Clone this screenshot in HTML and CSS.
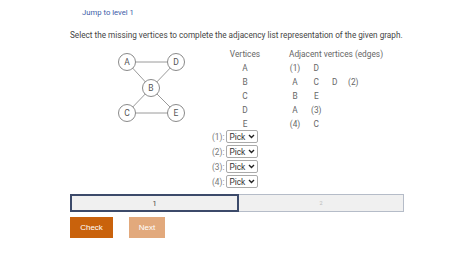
FILE: index.html
```html
<!DOCTYPE html>
<html>
<head>
<meta charset="utf-8">
<link rel="stylesheet" href="styles.css">
</head>
<body>
<div class="page">
  <div class="jump">Jump to level 1</div>
  <p class="prompt">Select the missing vertices to complete the adjacency list representation of the given graph.</p>
  <div class="problem">
    <svg class="graph" width="90" height="80" viewBox="0 0 90 80">
      <g stroke="#9a9a9a" stroke-width="1" fill="none">
        <line x1="17" y1="13" x2="66" y2="13"/>
        <line x1="17" y1="13" x2="41" y2="39"/>
        <line x1="66" y1="13" x2="41" y2="39"/>
        <line x1="41" y1="39" x2="17" y2="64"/>
        <line x1="41" y1="39" x2="66" y2="64"/>
        <line x1="17" y1="64" x2="66" y2="64"/>
      </g>
      <g stroke="#8a8a8a" stroke-width="1" fill="#fff">
        <circle cx="17" cy="13" r="8.5"/>
        <circle cx="66" cy="13" r="8.5"/>
        <circle cx="41" cy="39" r="8.5"/>
        <circle cx="17" cy="64" r="8.5"/>
        <circle cx="66" cy="64" r="8.5"/>
      </g>
      <g font-family="Roboto, sans-serif" font-size="8.5" fill="#555" text-anchor="middle">
        <text x="17" y="16">A</text>
        <text x="66" y="16">D</text>
        <text x="41" y="42">B</text>
        <text x="17" y="67">C</text>
        <text x="66" y="67">E</text>
      </g>
    </svg>
    <div class="lists">
      <div class="table">
        <div class="vcol head">Vertices</div><div class="acol head">Adjacent vertices (edges)</div>
        <div class="vcol">A</div><div class="acol"><span>(1)</span><span>D</span></div>
        <div class="vcol">B</div><div class="acol"><span>A</span><span>C</span><span>D</span><span>(2)</span></div>
        <div class="vcol">C</div><div class="acol"><span>B</span><span>E</span></div>
        <div class="vcol">D</div><div class="acol"><span>A</span><span>(3)</span></div>
        <div class="vcol">E</div><div class="acol"><span>(4)</span><span>C</span></div>
      </div>
      <div class="picks">
        <label class="pick">(1): <span class="sel">Pick <svg width="7" height="5" viewBox="0 0 7 5"><path d="M1 1 L3.5 3.5 L6 1" stroke="#222" stroke-width="1.4" fill="none"/></svg></span></label>
        <label class="pick">(2): <span class="sel">Pick <svg width="7" height="5" viewBox="0 0 7 5"><path d="M1 1 L3.5 3.5 L6 1" stroke="#222" stroke-width="1.4" fill="none"/></svg></span></label>
        <label class="pick">(3): <span class="sel">Pick <svg width="7" height="5" viewBox="0 0 7 5"><path d="M1 1 L3.5 3.5 L6 1" stroke="#222" stroke-width="1.4" fill="none"/></svg></span></label>
        <label class="pick">(4): <span class="sel">Pick <svg width="7" height="5" viewBox="0 0 7 5"><path d="M1 1 L3.5 3.5 L6 1" stroke="#222" stroke-width="1.4" fill="none"/></svg></span></label>
      </div>
    </div>
  </div>
  <div class="progress">
    <div class="seg active">1</div>
    <div class="seg">2</div>
  </div>
  <div class="buttons">
    <button class="btn check">Check</button>
    <button class="btn next">Next</button>
  </div>
</div>
</body>
</html>
```
FILE: styles.css
```css
html, body {
  margin: 0;
  padding: 0;
  background: #fff;
}
body {
  font-family: Roboto, "Liberation Sans", sans-serif;
  color: #555;
  font-size: 8.3px;
}
.page {
  width: 334px;
  padding: 7px 0 0 70px;
}
.jump {
  color: #3b5ca8;
  font-size: 7.7px;
  padding-left: 12px;
  line-height: 12px;
}
.prompt {
  margin: 10px 0 0 0;
  font-size: 8.2px;
  color: #444;
  line-height: 12px;
  white-space: nowrap;
}
.problem {
  display: flex;
  margin-top: 5px;
}
.graph {
  margin: 3px 0 0 40px;
  flex: none;
}
.lists {
  margin-left: 12px;
  display: flex;
  flex-direction: column;
}
.table {
  display: grid;
  grid-template-columns: 77px auto;
  grid-template-rows: 15px;
  grid-auto-rows: 14px;
  align-items: center;
  font-size: 8.3px;
  color: #666;
}
.vcol {
  text-align: center;
  width: 50px;
  margin-left: 8px;
}
.acol {
  display: flex;
}
.acol span {
  width: 18.5px;
  text-align: center;
}
.acol span:first-child {
  width: 12px;
}
.acol span:nth-child(2) {
  margin-left: 6px;
}
.acol.head {
  display: block;
}
.picks {
  display: flex;
  flex-direction: column;
  gap: 2px;
  margin-top: -1px;
}
.pick {
  display: flex;
  align-items: center;
  font-size: 8.3px;
  color: #777;
  height: 13px;
  gap: 2px;
}
.sel {
  display: inline-flex;
  align-items: center;
  gap: 3px;
  border: 1px solid #aaa;
  border-radius: 2px;
  height: 11px;
  padding: 0 2px 0 2px;
  color: #333;
  font-size: 8.3px;
}
.progress {
  display: flex;
  margin-top: 6px;
  height: 18px;
}
.seg {
  flex: none;
  display: flex;
  align-items: center;
  justify-content: center;
  background: #f0f0f0;
  box-sizing: border-box;
  font-size: 7.5px;
  color: #444;
}
.seg.active {
  width: 169px;
  border: 2px solid #3c4a6a;
}
.seg:not(.active) {
  width: 165px;
  border: 1px solid #b5bcc8;
  border-left: none;
  color: #bbb;
  font-size: 5.5px;
}
.buttons {
  display: flex;
  gap: 16px;
  margin-top: 5px;
}
.btn {
  border: none;
  color: #fff;
  font-family: "Liberation Sans", Arial, sans-serif;
  font-size: 8px;
  height: 21px;
  padding: 0;
}
.check {
  background: #c9620c;
  width: 43px;
}
.next {
  background: #e2a97c;
  width: 36px;
}
```
